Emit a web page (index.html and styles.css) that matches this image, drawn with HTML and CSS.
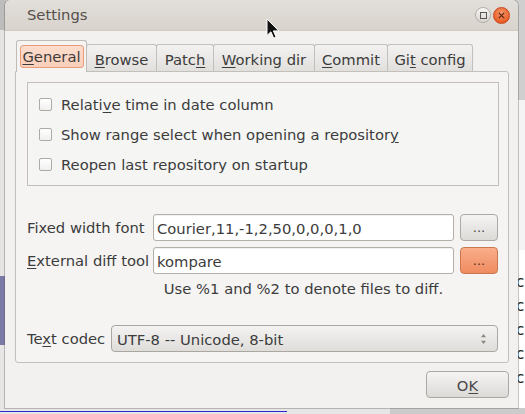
FILE: index.html
```html
<!DOCTYPE html>
<html>
<head>
<meta charset="utf-8">
<link rel="stylesheet" href="styles.css">
</head>
<body>
<div class="desktop">
  <div class="bg-left"></div>
  <div class="bg-right"><span>c</span><span>c</span><span>c</span><span>c</span><span>c</span></div>
  <div class="bg-bottom"></div>

  <div class="window">
    <div class="titlebar">
      <span class="title">Settings</span>
      <div class="wbtns">
        <span class="wbtn max"><span class="sq"></span></span>
        <span class="wbtn close">
          <svg width="17" height="17" viewBox="0 0 17 17"><path d="M5.8 5.8 L11.2 11.2 M11.2 5.8 L5.8 11.2" stroke="#5b2412" stroke-width="1.2" fill="none"/></svg>
        </span>
      </div>
    </div>

    <div class="content">
      <div class="tabbar">
        <div class="tab sel w-general"><span class="focus"><span><u>G</u>eneral</span></span></div>
        <div class="tab w-browse"><span><u>B</u>rowse</span></div>
        <div class="tab w-patch"><span>Patc<u>h</u></span></div>
        <div class="tab w-wdir"><span><u>W</u>orking dir</span></div>
        <div class="tab w-commit"><span><u>C</u>ommit</span></div>
        <div class="tab w-git"><span>Gi<u>t</u> config</span></div>
      </div>

      <div class="panel">
        <div class="group">
          <label class="check"><span class="box"></span><span>Relati<u>v</u>e time in date column</span></label>
          <label class="check"><span class="box"></span><span>Show range select when opening a repositor<u>y</u></span></label>
          <label class="check"><span class="box"></span><span>Reopen last repository on startup</span></label>
        </div>

        <div class="form">
          <span class="lbl">Fixed width font</span>
          <div class="input">Courier,11,-1,2,50,0,0,0,1,0</div>
          <div class="btn dots">...</div>

          <span class="lbl"><u>E</u>xternal diff tool</span>
          <div class="input">kompare</div>
          <div class="btn dots hot">...</div>

          <div class="hint">Use %1 and %2 to denote files to diff.</div>
        </div>

        <div class="codec">
          <span class="lbl">Te<u>x</u>t codec</span>
          <div class="combo">
            <span>UTF-8 -- Unicode, 8-bit</span>
            <svg class="arrows" width="7" height="12" viewBox="0 0 7 12"><path d="M3.5 1 L6 4.2 L1 4.2 Z M3.5 11 L6 7.8 L1 7.8 Z" fill="#8a8681"/></svg>
          </div>
        </div>
      </div>

      <div class="footer">
        <div class="btn ok"><span>O<u>K</u></span></div>
      </div>
    </div>
  </div>

  <svg class="cursor" width="14" height="22" viewBox="0 0 14 22"><path d="M1 1 L1 17.5 L4.9 13.8 L7.7 20.2 L10.1 19.1 L7.4 12.9 L12.8 12.9 Z" fill="#111" stroke="#fff" stroke-width="1" stroke-linejoin="round"/></svg>
</div>
</body>
</html>
```
FILE: styles.css
```css
html, body {
  margin: 0;
  padding: 0;
}
body {
  width: 525px;
  height: 414px;
  overflow: hidden;
  font-family: "DejaVu Sans", "Liberation Sans", sans-serif;
  font-size: 14.75px;
  color: #3c3c3c;
}
u { text-decoration: underline; text-underline-offset: 2px; text-decoration-thickness: 1px; }

.desktop {
  position: relative;
  width: 525px;
  height: 414px;
  background: #d8d8d8;
  overflow: hidden;
}
.bg-left {
  position: absolute;
  left: 0; top: 0;
  width: 6px; height: 414px;
  background: linear-gradient(to bottom, #bdbdbd 0, #bdbdbd 30px, #e6e4e2 30px, #e6e4e2 276px, #7b79a6 276px, #7b79a6 345px, #e8e6e4 345px);
}
.bg-right {
  position: absolute;
  right: 0; top: 0;
  width: 8px; height: 414px;
  background: linear-gradient(to bottom, #cfcfcf 0, #cfcfcf 100px, #f4f4f4 100px, #f4f4f4 250px, #ffffff 250px);
  display: flex;
  flex-direction: column;
  padding-top: 270px;
  box-sizing: border-box;
  font-size: 15px;
  line-height: 24px;
  color: #222;
}
.bg-right span { margin-left: -1px; }
.bg-bottom {
  position: absolute;
  left: 0; bottom: 0;
  width: 525px; height: 6px;
  background: linear-gradient(to right, #e6e6e6 0, #e6e6e6 390px, #cbcbcb 390px);
}
.bg-bottom::after {
  content: "";
  display: block;
  margin-top: 3px;
  width: 287px;
  height: 1px;
  background: #2b2bd0;
}

.window {
  position: absolute;
  left: 5px;
  top: 0;
  width: 513px;
  height: 408px;
  background: #f2f1f0;
  border-radius: 6px 6px 0 0;
  box-shadow: 0 0 0 1px rgba(90, 85, 80, 0.35);
  display: flex;
  flex-direction: column;
}

.titlebar {
  height: 31px;
  flex: none;
  display: flex;
  align-items: center;
  padding: 0 8px 0 22px;
  background: linear-gradient(to bottom, #e2ded9, #d8d3cd);
  border-radius: 6px 6px 0 0;
  border-bottom: 1px solid #d0cbc5;
  box-sizing: border-box;
}
.title {
  font-size: 14.75px;
  color: #55504b;
  margin-top: -1px;
}
.wbtns {
  margin-left: auto;
  display: flex;
  align-items: center;
  gap: 2px;
}
.wbtn {
  display: flex;
  align-items: center;
  justify-content: center;
  border-radius: 50%;
  box-sizing: border-box;
}
.wbtn.max {
  width: 16px;
  height: 16px;
  background: linear-gradient(to bottom, #f8f7f6, #d8d4d0);
  border: 1px solid #b5afa9;
}
.wbtn.max .sq {
  width: 7px;
  height: 7px;
  border: 1px solid #5a5652;
  box-sizing: border-box;
}
.wbtn.close {
  width: 17px;
  height: 17px;
  background: radial-gradient(circle at 50% 35%, #f69a6e, #ea5f28 70%, #d84a16);
  border: 1px solid #c4481d;
}
.wbtn.close svg { margin: -1px; }

.content {
  flex: 1;
  display: flex;
  flex-direction: column;
  padding: 9px 9px 10px 10px;
}

.tabbar {
  display: flex;
  align-items: flex-end;
  height: 32px;
  padding-left: 1px;
}
.tab {
  height: 28px;
  box-sizing: border-box;
  display: flex;
  align-items: center;
  justify-content: center;
  border: 1px solid #c3bfba;
  border-bottom: 0;
  border-radius: 3px 3px 0 0;
  background: linear-gradient(to bottom, #f3f2f1, #e1dfdc);
  margin-left: -1px;
  padding-top: 1px;
  white-space: nowrap;
}
.tab:first-child { margin-left: 0; }
.tab.sel {
  height: 32px;
  background: #f5f4f3;
  border-color: #bfbbb6;
  position: relative;
  z-index: 1;
  padding-top: 0;
  align-items: flex-start;
}
.tab .focus {
  margin-top: 4px;
  width: 64px;
  height: 23px;
  box-sizing: border-box;
  border: 1px solid #e79b78;
  border-radius: 3px;
  background: linear-gradient(to bottom, #fcdccd, #f9cfba);
  display: flex;
  align-items: center;
  justify-content: center;
}
.w-general { width: 71px; }
.w-browse { width: 71px; }
.w-patch { width: 58px; }
.w-wdir { width: 102px; }
.w-commit { width: 74px; }
.w-git { width: 86px; }

.panel {
  margin-top: -1px;
  height: 292px;
  box-sizing: border-box;
  border: 1px solid #c3bfba;
  border-radius: 0 3px 3px 3px;
  background: #f5f4f3;
  padding: 10px 10px 10px 11px;
  display: flex;
  flex-direction: column;
}

.group {
  height: 104px;
  box-sizing: border-box;
  border: 1px solid #c2beb9;
  width: 472px;
  padding: 15px 0 0 11px;
  display: flex;
  flex-direction: column;
  gap: 17px;
  background: #f5f5f4;
}
.check {
  display: flex;
  align-items: center;
  height: 13px;
  line-height: 13px;
  white-space: nowrap;
}
.box {
  width: 13px;
  height: 13px;
  box-sizing: border-box;
  border: 1px solid #aeaaa5;
  border-radius: 2px;
  background: linear-gradient(to bottom, #ffffff, #f1f0ef);
  margin-right: 9px;
  flex: none;
}

.form {
  margin-top: 28px;
  display: grid;
  grid-template-columns: 120px 301px 38px;
  grid-template-rows: 27px 27px auto;
  column-gap: 6px;
  row-gap: 6px;
  align-items: center;
}
.lbl { white-space: nowrap; }
.input {
  height: 27px;
  box-sizing: border-box;
  border: 1px solid #b3afa9;
  border-radius: 3px;
  background: #fff;
  box-shadow: inset 0 1px 1px rgba(0,0,0,0.06);
  padding-left: 3px;
  display: flex;
  align-items: center;
  padding-top: 1px;
  white-space: nowrap;
}
.btn {
  box-sizing: border-box;
  border: 1px solid #aca8a3;
  border-radius: 4px;
  background: linear-gradient(to bottom, #f5f4f3, #dcdad7);
  display: flex;
  align-items: center;
  justify-content: center;
  color: #4a4a4a;
}
.dots {
  height: 27px;
  font-size: 13px;
  padding-bottom: 1px;
}
.dots.hot {
  background: linear-gradient(to bottom, #f9ae8a, #ef8b60);
  border-color: #c9774f;
  color: #5b3323;
}
.hint {
  grid-column: 2;
  text-align: center;
  line-height: 18px;
  height: 18px;
  white-space: nowrap;
}

.codec {
  margin-top: 27px;
  display: flex;
  align-items: center;
}
.codec .lbl { width: 84px; }
.combo {
  flex: none;
  width: 387px;
  height: 27px;
  box-sizing: border-box;
  border: 1px solid #aaa6a0;
  border-radius: 4px;
  background: linear-gradient(to bottom, #f4f3f2, #dfddda);
  display: flex;
  align-items: center;
  padding: 1px 10px 0 5px;
  white-space: nowrap;
}
.combo .arrows { margin-left: auto; }

.footer {
  margin-top: 8px;
  display: flex;
  justify-content: flex-end;
}
.ok {
  width: 83px;
  height: 27px;
  padding-top: 1px;
}

.cursor {
  position: absolute;
  left: 266px;
  top: 18px;
}
```
